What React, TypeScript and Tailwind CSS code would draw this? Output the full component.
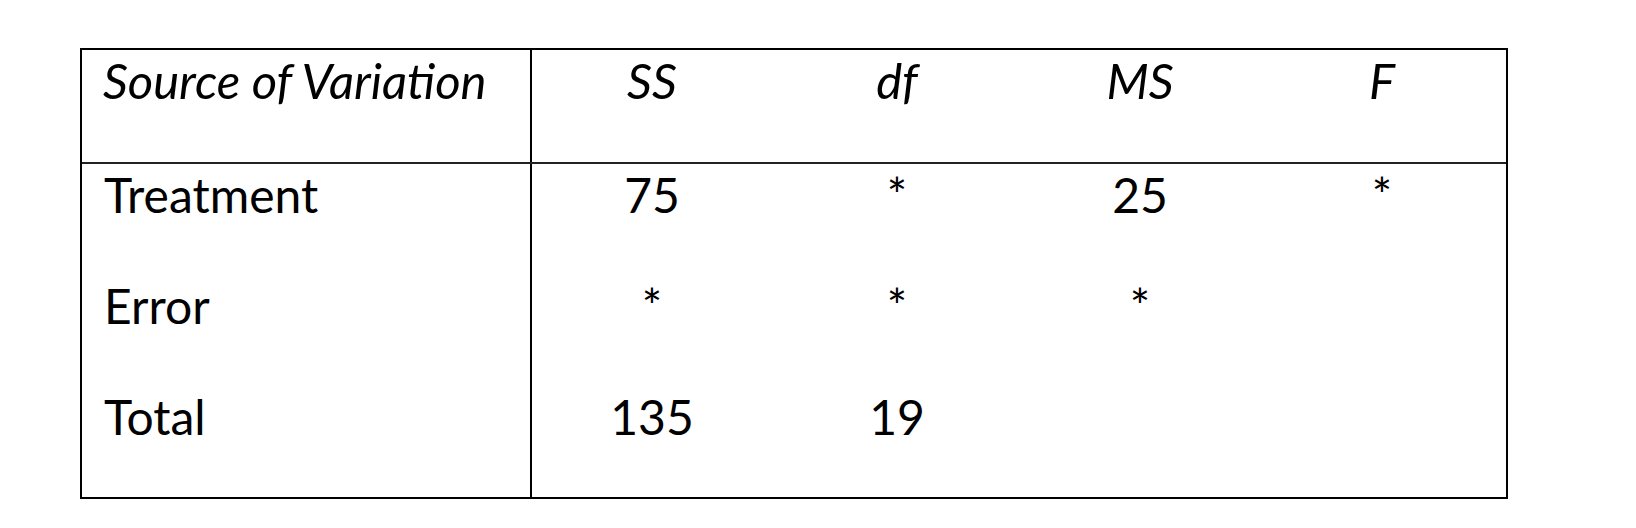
const rows = [
  { label: "Treatment", ss: "75", df: "*", ms: "25", f: "*" },
  { label: "Error", ss: "*", df: "*", ms: "*", f: "" },
  { label: "Total", ss: "135", df: "19", ms: "", f: "" },
];

const cols = "grid grid-cols-[450px_240px_250px_236px_248px]";

function App() {
  return (
    <div className="w-[1636px] h-[528px] bg-white pt-[48px] pl-[80px] font-['Lato',sans-serif] text-[48px] leading-[1.2] text-black">
      <div className="w-[1428px] border-2 border-black">
        {/* header */}
        <div className={`${cols} h-[114px] border-b-2 border-[#222] italic text-[49px]`}>
          <div className="border-r-2 border-black pl-[21px] pt-[1px]">Source of Variation</div>
          <div className="text-center pt-[1px]">SS</div>
          <div className="text-center pt-[1px]">df</div>
          <div className="text-center pt-[1px]">MS</div>
          <div className="text-center pt-[1px]">F</div>
        </div>
        {rows.map((r) => (
          <div key={r.label} className={`${cols} h-[111px]`}>
            <div className="border-r-2 border-black pl-[22px] pt-[2px]">{r.label}</div>
            <div className="text-center pt-[2px]">{r.ss}</div>
            <div className="text-center pt-[2px]">{r.df}</div>
            <div className="text-center pt-[2px]">{r.ms}</div>
            <div className="text-center pt-[2px]">{r.f}</div>
          </div>
        ))}
      </div>
    </div>
  );
}

export default App;
